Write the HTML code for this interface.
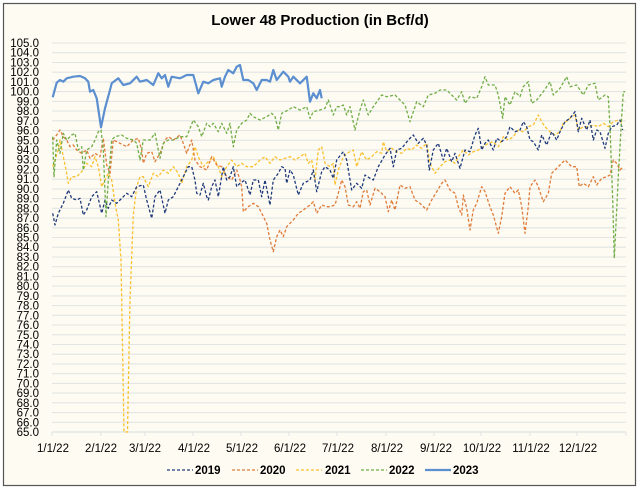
<!DOCTYPE html>
<html><head><meta charset="utf-8"><style>
html,body{margin:0;padding:0;background:#fff;}
svg{display:block;}
text{font-family:"Liberation Sans",sans-serif;fill:#000;}
</style></head><body>
<svg width="640" height="490" viewBox="0 0 640 490" xmlns="http://www.w3.org/2000/svg">
<rect x="3.5" y="3.5" width="632" height="482" fill="#fdfbf2" stroke="#555" stroke-width="1.2"/>
<text x="320" y="25" text-anchor="middle" font-size="15" font-weight="bold">Lower 48 Production (in Bcf/d)</text>
<g id="grid" stroke="#e2e5e4" stroke-width="1"></g>
<g stroke="#e2e5e4" stroke-width="1">
<script>/* no-op */</script>
</g>
<g stroke="#e2e5e4" stroke-width="1.1">
<line x1="52" x2="626" y1="43" y2="43"/><line x1="52" x2="626" y1="52.7" y2="52.7"/><line x1="52" x2="626" y1="62.5" y2="62.5"/><line x1="52" x2="626" y1="72.2" y2="72.2"/><line x1="52" x2="626" y1="81.9" y2="81.9"/><line x1="52" x2="626" y1="91.6" y2="91.6"/><line x1="52" x2="626" y1="101.4" y2="101.4"/><line x1="52" x2="626" y1="111.1" y2="111.1"/><line x1="52" x2="626" y1="120.8" y2="120.8"/><line x1="52" x2="626" y1="130.5" y2="130.5"/><line x1="52" x2="626" y1="140.3" y2="140.3"/><line x1="52" x2="626" y1="150" y2="150"/><line x1="52" x2="626" y1="159.7" y2="159.7"/><line x1="52" x2="626" y1="169.4" y2="169.4"/><line x1="52" x2="626" y1="179.2" y2="179.2"/><line x1="52" x2="626" y1="188.9" y2="188.9"/><line x1="52" x2="626" y1="198.6" y2="198.6"/><line x1="52" x2="626" y1="208.3" y2="208.3"/><line x1="52" x2="626" y1="218.1" y2="218.1"/><line x1="52" x2="626" y1="227.8" y2="227.8"/><line x1="52" x2="626" y1="237.5" y2="237.5"/><line x1="52" x2="626" y1="247.2" y2="247.2"/><line x1="52" x2="626" y1="257" y2="257"/><line x1="52" x2="626" y1="266.7" y2="266.7"/><line x1="52" x2="626" y1="276.4" y2="276.4"/><line x1="52" x2="626" y1="286.1" y2="286.1"/><line x1="52" x2="626" y1="295.9" y2="295.9"/><line x1="52" x2="626" y1="305.6" y2="305.6"/><line x1="52" x2="626" y1="315.3" y2="315.3"/><line x1="52" x2="626" y1="325" y2="325"/><line x1="52" x2="626" y1="334.8" y2="334.8"/><line x1="52" x2="626" y1="344.5" y2="344.5"/><line x1="52" x2="626" y1="354.2" y2="354.2"/><line x1="52" x2="626" y1="363.9" y2="363.9"/><line x1="52" x2="626" y1="373.7" y2="373.7"/><line x1="52" x2="626" y1="383.4" y2="383.4"/><line x1="52" x2="626" y1="393.1" y2="393.1"/><line x1="52" x2="626" y1="402.8" y2="402.8"/><line x1="52" x2="626" y1="412.6" y2="412.6"/><line x1="52" x2="626" y1="422.3" y2="422.3"/>
<line x1="52" x2="626" y1="432" y2="432" stroke="#d8dcdc"/>
<line x1="52" x2="52" y1="432" y2="436"/><line x1="101" x2="101" y1="432" y2="436"/><line x1="145" x2="145" y1="432" y2="436"/><line x1="193" x2="193" y1="432" y2="436"/><line x1="241" x2="241" y1="432" y2="436"/><line x1="289" x2="289" y1="432" y2="436"/><line x1="337" x2="337" y1="432" y2="436"/><line x1="386" x2="386" y1="432" y2="436"/><line x1="434" x2="434" y1="432" y2="436"/><line x1="481" x2="481" y1="432" y2="436"/><line x1="530" x2="530" y1="432" y2="436"/><line x1="577" x2="577" y1="432" y2="436"/><line x1="626" x2="626" y1="432" y2="436"/>
</g>
<g font-size="11.5" text-anchor="end">
<text x="39" y="47">105.0</text><text x="39" y="56.7">104.0</text><text x="39" y="66.5">103.0</text><text x="39" y="76.2">102.0</text><text x="39" y="85.9">101.0</text><text x="39" y="95.6">100.0</text><text x="39" y="105.4">99.0</text><text x="39" y="115.1">98.0</text><text x="39" y="124.8">97.0</text><text x="39" y="134.5">96.0</text><text x="39" y="144.3">95.0</text><text x="39" y="154">94.0</text><text x="39" y="163.7">93.0</text><text x="39" y="173.4">92.0</text><text x="39" y="183.2">91.0</text><text x="39" y="192.9">90.0</text><text x="39" y="202.6">89.0</text><text x="39" y="212.3">88.0</text><text x="39" y="222.1">87.0</text><text x="39" y="231.8">86.0</text><text x="39" y="241.5">85.0</text><text x="39" y="251.2">84.0</text><text x="39" y="261">83.0</text><text x="39" y="270.7">82.0</text><text x="39" y="280.4">81.0</text><text x="39" y="290.1">80.0</text><text x="39" y="299.9">79.0</text><text x="39" y="309.6">78.0</text><text x="39" y="319.3">77.0</text><text x="39" y="329">76.0</text><text x="39" y="338.8">75.0</text><text x="39" y="348.5">74.0</text><text x="39" y="358.2">73.0</text><text x="39" y="367.9">72.0</text><text x="39" y="377.7">71.0</text><text x="39" y="387.4">70.0</text><text x="39" y="397.1">69.0</text><text x="39" y="406.8">68.0</text><text x="39" y="416.6">67.0</text><text x="39" y="426.3">66.0</text><text x="39" y="436">65.0</text>
</g>
<g font-size="11.5" text-anchor="middle">
<text x="53" y="452">1/1/22</text><text x="101" y="452">2/1/22</text><text x="145" y="452">3/1/22</text><text x="194" y="452">4/1/22</text><text x="242" y="452">5/1/22</text><text x="290" y="452">6/1/22</text><text x="338" y="452">7/1/22</text><text x="387" y="452">8/1/22</text><text x="436" y="452">9/1/22</text><text x="482" y="452">10/1/22</text><text x="531" y="452">11/1/22</text><text x="578" y="452">12/1/22</text>
</g>
<g fill="none" stroke-width="1.3" stroke-dasharray="3,2" stroke-linejoin="round">
<polyline stroke="#fbc02d" points="52.7,166.7 55,160 58.3,150 60,140 63.3,156.7 66.7,173.3 68.3,183.3 71.7,176.7 76.7,176.7 81.7,171.7 86.7,163.3 91.7,166.7 95,156.7 98.3,166.7 101.7,186.7 105,180 108.3,173.3 111.7,180 115,203.3 118.3,220 121,260 124,432 127.5,432 130,300 133.3,215 136.7,186.7 140,176.7 143.3,176.7 148.3,186.7 153.3,173.3 158.3,176.7 163.3,170 168.3,173.3 173.3,166.7 178.3,173.3 181.7,183.3 186.7,166.7 191.7,160 195,146.7 198.3,156.7 203.3,166.7 208.3,161.7 213.3,156.7 218.3,166.7 221.7,176.7 226.7,166.7 231.7,160 236.7,166.7 241.7,163.3 246.7,166.7 253.3,166.7 260,160 265,156.7 270,163.3 275,156.7 280,160 285,158.3 290,156.7 295,160 300,156.7 305,153.3 308.3,163.3 311.7,160 315,180 318.3,150 321.7,146.7 325,163.3 330,166.7 333.3,163.3 335,185 338.3,170 343.3,156.7 346.7,153.3 350,151.7 353.3,150 356.7,166.7 361.7,151.7 366.7,160 371.7,156.7 376.7,151.7 381.7,153.3 383.3,141.7 386.7,151.7 391.7,148.3 396.7,151.7 401.7,153.3 406.7,148.3 411.7,150 416.7,145 421.7,148.3 426.7,143.3 430,163.3 435,173.3 440,166.7 445,161.7 450,160 455,163.3 458.3,156.7 463.3,150 468.3,155 473.3,151.7 478.3,150 483.3,146.7 488.3,143.3 493.3,141.7 498.3,146.7 503.3,136.7 508.3,140 513.3,136.7 518.3,130 523.3,131.7 528.3,126.7 533.3,125 538.3,115 541.7,121.7 545,126.7 550,131.7 555,135 560,131.7 563.3,123.3 568.3,120 571.7,116.7 575,115 578.3,130 583.3,126.7 588.3,126.7 593.3,125 598.3,126.7 603.3,123.3 608.3,126.7 613.3,121.7 618.3,120 623.3,123.3"/>
<polyline stroke="#e07b39" points="52.7,140 56.7,135 60,130 63.3,136.7 66.7,140 70,146.7 73.3,145 76.7,150 81.7,153.3 86.7,150 90,158.3 95,153.3 100,156.7 103.3,138.3 106.7,165 110,173.3 113.3,140 120,143.3 126.7,146.7 133.3,140 138.3,138.3 141.7,150 143.3,163.3 146.7,153.3 151.7,151.7 155,161.7 160,153.3 165,140 168.3,136.7 173.3,140 180,135 183.3,143.3 186.7,153.3 191.7,140 195,160 200,166.7 206.7,170 211.7,156.7 216.7,165 221.7,166.7 226.7,176.7 231.7,180 236.7,170 240,180 241.7,186.7 243.3,211.7 248.3,206.7 253.3,203.3 258.3,206.7 261.7,213.3 266.7,223.3 270,240 273.3,251.7 276.7,236.7 280,230 283.3,236.7 286.7,226.7 293.3,220 298.3,213.3 303.3,210 310,205 313.3,201.7 316.7,213.3 321.7,205 326.7,206.7 330,206.7 335,205 338.3,193.3 341.7,180 345,186.7 348.3,205 353.3,206.7 356.7,201.7 360,208.3 363.3,191.7 366.7,190 370,205 375,188.3 380,191.7 385,196.7 388.3,211.7 391.7,200 395,210 400,185 405,188.3 410,186.7 415,200 420,203.3 426.7,210 431.7,200 436.7,191.7 441.7,183.3 445,180 450,190 455,193.3 458.3,206.7 461.7,215 463.3,195 466.7,208.3 470,230 473.3,210 476.7,203.3 481.7,186.7 485,191.7 490,206.7 493.3,215 498.3,233.3 501.7,216.7 505,193.3 510,186.7 515,193.3 518.3,190 521.7,206.7 525,233.3 528.3,206.7 530,186.7 535,180 538.3,186.7 543.3,201.7 548.3,193.3 551.7,173.3 558.3,166.7 565,160 568.3,163.3 571.7,166.7 576.7,166.7 579.3,186.7 583.3,183.3 588.3,186.7 593.3,176.7 596.7,185 601.7,178.3 606.7,176.7 610,175 613.3,160 616.7,163.3 620,170 623.3,166.7"/>
<polyline stroke="#1f3a7a" points="52.7,213.3 55,225 58.3,213.3 63.3,203.3 68.3,190 71.7,198.3 76.7,200 80,198.3 83.3,215 86.7,210 91.7,196.7 96.7,191.7 101.7,213.3 105,200 108.3,208.3 111.7,200 116.7,203.3 123.3,196.7 126.7,193.3 131.7,196.7 136.7,186.7 143.3,185 146.7,200 151.7,218.3 155,196.7 160,190 165,213.3 168.3,200 173.3,196.7 178.3,186.7 183.3,176.7 188.3,166.7 191.7,166.7 195,180 196.7,193.3 200,195 203.3,183.3 206.7,196.7 208.3,200 211.7,186.7 215,180 218.3,196.7 223.3,166.7 226.7,180 230,176.7 233.3,166.7 236.7,186.7 240,183.3 245,180 250,195 253.3,180 258.3,180 261.7,196.7 265,180 270,205 273.3,180 278.3,173.3 281.7,166.7 285,168.3 286.7,183.3 290,170 293.3,175 298.3,195 303.3,183.3 310,180 313.3,170 316.7,191.7 321.7,171.7 325,166.7 330,170 333.3,178.3 336.7,160 343.3,151.7 346.7,160 351.7,190 356.7,183.3 361.7,188.3 365,175 370,178.3 373.3,180 378.3,166.7 385,155 390,148.3 393.3,166.7 396.7,150 401.7,148.3 408.3,140 413.3,135 418.3,143.3 423.3,138.3 426.7,145 429.3,170 433.3,150 438.3,143.3 443.3,160 446.7,148.3 451.7,161.7 455,153.3 460,168.3 465,150 470,151.7 475,135 478.3,128.3 481.7,150 485,143.3 488.3,140 493.3,150 496.7,138.3 501.7,141.7 506.7,136.7 510,126.7 515,131.7 520,130 523.3,121.7 526.7,126.7 530,140 533.3,141.7 538.3,150 541.7,135 546.7,145 551.7,131.7 556.7,140 560,131.7 565,121.7 570,118.3 575,111.7 578.3,131.7 581.7,118.3 586.7,130 590,120 593.3,140 596.7,130 600,131.7 605,148.3 608.3,133.3 611.7,126.7 616.7,125 620,120 622.7,130"/>
<polyline stroke="#70ad47" points="52.7,136.7 54,176.7 56.7,140 60,153.3 63.3,133.3 66.7,140 71.7,135 75,133.3 78.3,150 81.7,146.7 83.3,170 86.7,150 91.7,146.7 95,140 98.3,131.7 101,130 103.3,150 106,216.7 108.3,180 111.7,140 115,136.7 121.7,135 126.7,138.3 133.3,140 136.7,143.3 140,160 143.3,140 150,140 155,133.3 160,158.3 163.3,143.3 168.3,140 173.3,140 180,136.7 186.7,136.7 193.3,120 198.3,126.7 201.7,136.7 206.7,123.3 210,126.7 213.3,123.3 218.3,131.7 221.7,123.3 226.7,133.3 230,123.3 233.3,146.7 236.7,130 241.7,123.3 246.7,120 250,113.3 253.3,116.7 260,120 266.7,116.7 271.7,113.3 275,116.7 278.3,130 281.7,113.3 288.3,110 293.3,106.7 300,110 306.7,106.7 310,118.3 313.3,111.7 320,110 325,108.3 328.3,100 333.3,115 336.7,106.7 340,106.7 343.3,105 346.7,115 350,106.7 355,130 360,110 363.3,100 368.3,115 373.3,106.7 381.7,95 386.7,96.7 395,95 401.7,101.7 405,105 410,121.7 416.7,101.7 423.3,106.7 428.3,95 435,93.3 440,90 446.7,90 451.7,95 456.7,100 461.7,91.7 465,103.3 470,96.7 476.7,98.3 481.7,86.7 485,76.7 488.3,85 495,85 498.3,95 502.7,118.3 505,96.7 510,105 515,91.7 520,96.7 523.3,86.7 528.3,81.7 531.7,103.3 536.7,100 543.3,91.7 550,81.7 553.3,95 560,88.3 566.7,76.7 570,86.7 576.7,85 583.3,95 588.3,85 595,83.3 598.3,100 605,95 608.3,96.7 610,126.7 612.7,200 614.3,258.3 618.3,176.7 621.7,116.7 623.3,91.7 625,91.7"/>
</g>
<polyline fill="none" stroke="#5b8fd0" stroke-width="2.2" stroke-linejoin="round" points="52.7,97.3 56.7,82.7 60,80 63.3,81.7 66.7,78.3 73.3,76.7 80,76 85,78.3 88.3,81.7 90,91.7 93.3,90 96.7,98.3 101,127.3 105,108.3 110,90 111.7,83.3 118.3,78.3 123.3,85 130,83.3 136.7,76.7 140,81.7 146.7,80 153.3,85 158.3,73.3 161.7,78.3 165,75 168.3,86.7 171.7,76.7 180,78.3 186.7,75 193.3,75 198.3,93.3 203.3,81.7 208.3,83.3 213.3,80 220,78.3 221.7,86.7 225,76.7 228.3,70 233.3,73.3 236.7,66.7 240,65 243.3,80 248.3,80 253.3,83.3 256.7,90 261.7,80 266.7,80 270,81.7 273.3,70 276.7,80 283.3,71.7 288.3,76.7 290,81.7 293.3,76.7 300,83.3 306.7,76.7 310,101.7 313.3,93.3 316.7,98.3 320,90 321.7,98.3"/>
<g font-size="11.5" font-weight="bold">
<line x1="167" x2="193" y1="470" y2="470" stroke="#1f3a7a" stroke-width="1.3" stroke-dasharray="3,2"/><text x="195" y="474">2019</text>
<line x1="232" x2="258" y1="470" y2="470" stroke="#e07b39" stroke-width="1.3" stroke-dasharray="3,2"/><text x="260" y="474">2020</text>
<line x1="296" x2="322" y1="470" y2="470" stroke="#fbc02d" stroke-width="1.3" stroke-dasharray="3,2"/><text x="325" y="474">2021</text>
<line x1="361" x2="387" y1="470" y2="470" stroke="#70ad47" stroke-width="1.3" stroke-dasharray="3,2"/><text x="389" y="474">2022</text>
<line x1="425" x2="451" y1="470" y2="470" stroke="#5b8fd0" stroke-width="2.2"/><text x="453" y="474">2023</text>
</g>
</svg>
</body></html>
